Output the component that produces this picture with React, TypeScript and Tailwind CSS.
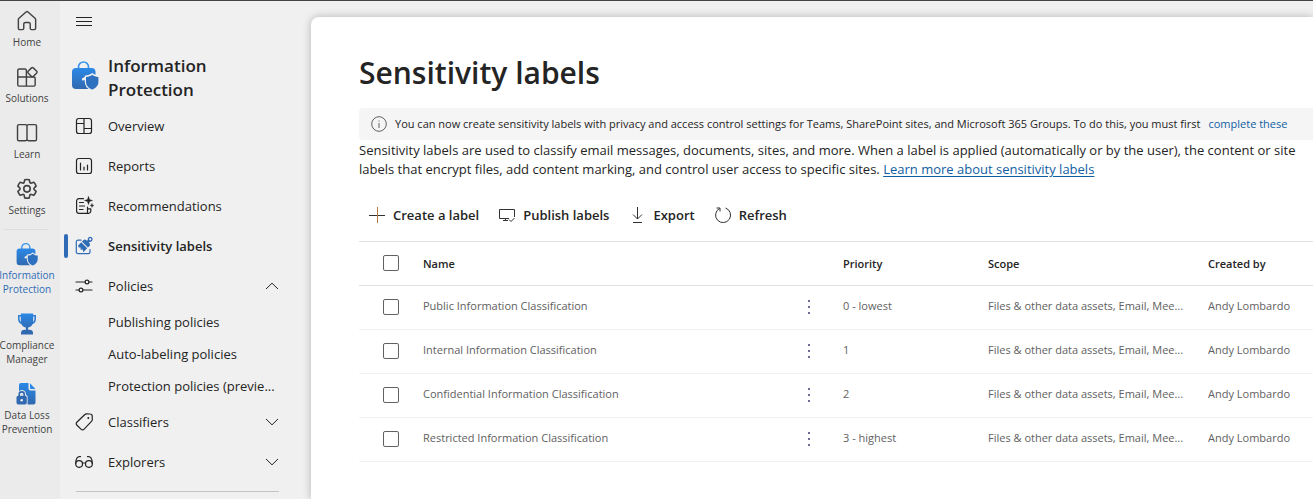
import type { ReactNode } from "react";

type IconProps = { children: ReactNode; className?: string };

function LineIcon({ children, className = "size-5" }: IconProps) {
  return (
    <svg
      viewBox="0 0 20 20"
      className={className}
      fill="none"
      stroke="currentColor"
      strokeWidth="1.2"
      strokeLinecap="round"
      strokeLinejoin="round"
      aria-hidden="true"
    >
      {children}
    </svg>
  );
}

const HomeIcon = () => (
  <LineIcon className="size-6">
    <path d="M9.2 2.5a1.2 1.2 0 0 1 1.6 0l5.900 5.200c.3.3.5.7.5 1.100v7.300c0 .6-.5 1.100-1.100 1.100h-2.300c-.6 0-1.100-.5-1.100-1.100v-3.500c0-.8-.6-1.400-1.400-1.400H8.700c-.8 0-1.400.6-1.400 1.400v3.500c0 .6-.5 1.100-1.100 1.100H3.900c-.6 0-1.100-.5-1.100-1.100V8.800c0-.4.200-.8.500-1.100z" />
  </LineIcon>
);

const SolutionsIcon = () => (
  <LineIcon className="size-6">
    <path d="M9.500 10V4.500c0-.6-.5-1.100-1.100-1.100H3.400c-.6 0-1.100.5-1.100 1.100v12c0 .6.500 1.100 1.100 1.100h12.300c.6 0 1.100-.5 1.100-1.100v-5.400c0-.6-.5-1.100-1.100-1.100zM2.300 10h7.200M9.500 10v7.600" />
    <path d="M13.800 2.400a1 1 0 0 1 1.400 0l2.900 2.900a1 1 0 0 1 0 1.400l-2.900 2.900a1 1 0 0 1-1.400 0l-2.900-2.900a1 1 0 0 1 0-1.400z" />
  </LineIcon>
);

const LearnIcon = () => (
  <LineIcon className="size-6">
    <path d="M10 4.200c0-.7-.6-1.200-1.300-1.200H3.200c-.6 0-1.100.5-1.100 1.100v11.300c0 .6.500 1.100 1.100 1.100h5.500c.7 0 1.300-.5 1.300-1.200zM10 4.200c0-.7.6-1.200 1.300-1.200h5.500c.6 0 1.100.5 1.100 1.100v11.300c0 .6-.5 1.100-1.100 1.100h-5.500c-.7 0-1.300-.5-1.300-1.200z" />
  </LineIcon>
);

const SettingsIcon = () => (
  <LineIcon className="size-6">
    <g transform="translate(10 10) scale(1.120) translate(-10 -9.200)">
      <path d="M8.300 2.300a7.900 7.900 0 0 1 3.400 0l.4 1.900c.1.500.7.800 1.200.6l1.800-.6a7.900 7.900 0 0 1 1.700 2.900l-1.400 1.300a.9.900 0 0 0 0 1.300l1.400 1.200a7.900 7.900 0 0 1-1.700 3l-1.800-.6a.9.900 0 0 0-1.200.6l-.4 1.900a7.900 7.900 0 0 1-3.400 0l-.4-1.900a.9.900 0 0 0-1.200-.6l-1.800.6a7.900 7.900 0 0 1-1.700-3l1.400-1.200a.9.900 0 0 0 0-1.300L3.200 7.100a7.900 7.900 0 0 1 1.700-2.900l1.800.6c.5.200 1.100-.1 1.200-.6z" />
      <circle cx="10" cy="9.100" r="2.400" />
    </g>
  </LineIcon>
);

function ShieldBag({ className, gap }: { className: string; gap: string }) {
  return (
    <svg viewBox="0 0 28 30" className={className} aria-hidden="true">
      <defs>
        <linearGradient id="bagFill" x1="0" y1="0" x2="0" y2="1">
          <stop offset="0" stopColor="#2b88e6" />
          <stop offset="1" stopColor="#3069b0" />
        </linearGradient>
      </defs>
      <path d="M7.500 9.500V7a5 5 0 0 1 10 0v2.500" fill="none" stroke="#3a94ea" strokeWidth="1.700" />
      <rect x="1" y="8" width="23.500" height="21" rx="4" fill="url(#bagFill)" />
      <path
        d="M21.200 14.500c1.700 1.500 3.600 2 6.200 2.200v5c0 3.900-2.500 6.300-6.200 7.800-3.700-1.500-6.200-3.900-6.200-7.800v-5c2.600-.2 4.500-.7 6.200-2.200z"
        fill={gap}
        stroke={gap}
        strokeWidth="2.400"
      />
      <path d="M11 18.500l3.500-2 1 3.500-4.500.5z" fill={gap} />
      <path
        d="M21.200 14.800c1.700 1.500 3.600 2 6.200 2.200v4.700c0 3.900-2.500 6.300-6.200 7.800-3.700-1.500-6.200-3.900-6.200-7.800V17c2.600-.2 4.500-.7 6.200-2.200z"
        fill="#2d70bf"
      />
    </svg>
  );
}

const TrophyIcon = () => (
  <svg viewBox="0 0 24 24" className="size-6" aria-hidden="true">
    <defs>
      <linearGradient id="cupFill" x1="0" y1="0" x2="0" y2="1">
        <stop offset="0" stopColor="#2b88e6" />
        <stop offset="1" stopColor="#3069b0" />
      </linearGradient>
    </defs>
    <path d="M6.500 3.700H3.800v3c0 2.700 1.600 4.500 4.200 4.900M17.500 3.700h2.700v3c0 2.700-1.600 4.500-4.200 4.900" fill="none" stroke="#2f80d4" strokeWidth="1.600" />
    <path d="M5.800 1.500h12.400v7.800c0 3.300-2.100 5.700-5.100 6.200V18h-2.200v-2.500c-3-.5-5.100-2.900-5.100-6.200z" fill="url(#cupFill)" />
    <path d="M9.500 17.800h5c2 0 3.500 1.300 3.500 3v1.700H6v-1.700c0-1.700 1.500-3 3.500-3z" fill="#3069b0" />
  </svg>
);

const DataLossIcon = () => (
  <svg viewBox="0 0 24 24" className="size-6" aria-hidden="true">
    <defs>
      <linearGradient id="fileFill" x1="0" y1="0" x2="0" y2="1">
        <stop offset="0" stopColor="#2b88e6" />
        <stop offset="1" stopColor="#3069b0" />
      </linearGradient>
    </defs>
    <path d="M6 1H13.500v5.500C13.500 7.600 14.400 8.500 15.500 8.500H20.500v12a2 2 0 0 1-2 2H12.600V14.500a1.600 1.600 0 0 0-1.600-1.600V12a4 4 0 0 0-7-2.600V3a2 2 0 0 1 2-2z" fill="url(#fileFill)" />
    <path d="M15 1.300l5.500 5.700h-4.700a.8.800 0 0 1-.8-.8z" fill="#2b88e6" />
    <rect x="1.500" y="13.800" width="10.300" height="8.700" rx="1.800" fill="#3069b0" />
    <path d="M4.200 14v-1.600a2.500 2.500 0 0 1 5 0V14" fill="none" stroke="#3069b0" strokeWidth="1.600" />
    <circle cx="6.700" cy="18.200" r="1.300" fill="#ebebeb" />
  </svg>
);

const OverviewIcon = () => (
  <LineIcon>
    <rect x="2.500" y="2.500" width="15" height="15" rx="2.300" />
    <path d="M10 2.500v15M2.500 7.500H10M10 12.500h7.500" />
  </LineIcon>
);

const ReportsIcon = () => (
  <LineIcon>
    <rect x="2.500" y="2.500" width="15" height="15" rx="2.300" />
    <path d="M6.500 7v7M10 11v3M13.500 9v5" />
  </LineIcon>
);

const RecommendationsIcon = () => (
  <LineIcon>
    <path d="M9.500 2.700H4.800a2.200 2.200 0 0 0-2.200 2.200v10.200c0 1.200 1 2.200 2.200 2.200h9.400M13.500 17.300V11M13.500 17.300h1.100a2.200 2.200 0 0 0 2.200-2.200v-2.300h-3.300M5.500 6.500h4M5.500 10h5M5.500 13.500h3.500" />
    <path d="M14.500.3l1.100 3.100 3.100 1.100-3.100 1.100-1.100 3.100-1.100-3.100-3.100-1.100 3.100-1.100zM18 7.500l.6 1.400 1.400.6-1.400.6-.6 1.400-.6-1.400-1.400-.6 1.400-.6z" fill="currentColor" strokeWidth=".3" />
  </LineIcon>
);

const SensitivityIcon = () => (
  <LineIcon>
    <path d="M7 4.200H4a1.700 1.700 0 0 0-1.700 1.700v10A1.700 1.700 0 0 0 4 17.600h10.300a1.700 1.700 0 0 0 1.700-1.700V13.500" />
    <g transform="translate(11.500 8) rotate(45)" stroke="none" fill="currentColor">
      <path d="M-4.200 1.800h8.400v5.500L2 5.900.6 7.500-1 6-2.300 7.400-4.200 6.200z" />
      <path d="M-4.200.8v-2.300c0-1.100.8-1.800 1.800-1.800h1l.4-2.400h2l.4 2.400h1c1 0 1.800.7 1.800 1.800V.8z" />
      <circle cx="0" cy="-6.600" r="1.800" fill="none" stroke="currentColor" strokeWidth="1.300" />
    </g>
  </LineIcon>
);

const PoliciesIcon = () => (
  <LineIcon>
    <path d="M2 6h9M15 6h3M2 14h3M9 14h9" />
    <circle cx="13" cy="6" r="1.900" />
    <circle cx="7" cy="14" r="1.900" />
  </LineIcon>
);

const TagIcon = () => (
  <LineIcon>
    <path d="M10.900 2.500c.4-.4 1-.6 1.500-.6l3.700.1c1.200 0 2.100 1 2.100 2.100l.1 3.500c0 .6-.2 1.100-.6 1.500l-7.800 8.200a1.900 1.900 0 0 1-2.700 0l-4.400-4.300a1.900 1.900 0 0 1 0-2.700z" />
    <circle cx="14.300" cy="5.900" r="1" fill="currentColor" stroke="none" />
  </LineIcon>
);

const GlassesIcon = () => (
  <LineIcon>
    <rect x="1.700" y="8.700" width="6.800" height="6.600" rx="3.200" />
    <rect x="11.500" y="8.700" width="6.800" height="6.600" rx="3.200" />
    <path d="M8.500 11h3M1.700 11.500c.1-3 .9-5.600 2.300-6.500.7-.4 1.700-.5 2.500-.3M18.300 11.500c-.1-3-.9-5.600-2.300-6.500-.7-.4-1.700-.5-2.500-.3" />
  </LineIcon>
);

function Chevron({ up = false }: { up?: boolean }) {
  return (
    <svg viewBox="0 0 14 8" className="h-2 w-3.5" fill="none" stroke="#242424" strokeWidth="1" aria-hidden="true">
      <path d={up ? "M1 7l6-5.800L13 7" : "M1 1l6 5.800L13 1"} />
    </svg>
  );
}

function RailLink({ icon, label, active = false }: { icon: ReactNode; label: string; active?: boolean }) {
  return (
    <a
      href="#"
      className={`flex w-[54px] flex-col items-center gap-0.5 py-2 text-center text-[10px] leading-[14px] ${
        active ? "text-[#2f6cb5]" : "text-[#424242]"
      }`}
    >
      {icon}
      <span>{label}</span>
    </a>
  );
}

function NavLink({
  icon,
  label,
  active = false,
  chevron,
}: {
  icon: ReactNode;
  label: string;
  active?: boolean;
  chevron?: "up" | "down";
}) {
  return (
    <a href="#" className="flex h-10 items-center pl-1 text-[13px] leading-5 text-[#242424]">
      <span className={`h-6 w-1 rounded-sm ${active ? "bg-[#2f6cb5]" : ""}`} />
      <span className={`ml-1.5 ${active ? "text-[#2f6cb5]" : ""}`}>{icon}</span>
      <span className={`ml-3.5 grow whitespace-nowrap ${active ? "font-semibold" : ""}`}>{label}</span>
      {chevron && <Chevron up={chevron === "up"} />}
    </a>
  );
}

function SubLink({ label }: { label: string }) {
  return (
    <a href="#" className="flex h-8 items-center pl-12 text-[13px] leading-5 whitespace-nowrap text-[#242424]">
      {label}
    </a>
  );
}

function ToolButton({ icon, label }: { icon: ReactNode; label: string }) {
  return (
    <button type="button" className="flex items-center gap-2 text-[13px] leading-5 font-semibold text-[#242424]">
      {icon}
      {label}
    </button>
  );
}

function ToolIcon({ children }: { children: ReactNode }) {
  return (
    <svg viewBox="0 0 16 16" className="size-4" fill="none" stroke="#323130" strokeWidth="1" aria-hidden="true">
      {children}
    </svg>
  );
}

function Check({ label }: { label: string }) {
  return (
    <input
      type="checkbox"
      aria-label={label}
      className="block size-4 appearance-none rounded-[2px] border border-[#616161] bg-white checked:bg-[#2f6cb5]"
    />
  );
}

const labels = [
  { name: "Public Information Classification", priority: "0 - lowest" },
  { name: "Internal Information Classification", priority: "1" },
  { name: "Confidential Information Classification", priority: "2" },
  { name: "Restricted Information Classification", priority: "3 - highest" },
];

export default function App() {
  return (
    <div className="flex min-h-screen overflow-hidden border-t border-[#444444] bg-[#f0f0f0] font-['Open_Sans','Noto_Sans',sans-serif]">
      <nav aria-label="Portal" className="w-[60px] shrink-0 bg-[#ebebeb]">
        <RailLink icon={<HomeIcon />} label="Home" />
        <RailLink icon={<SolutionsIcon />} label="Solutions" />
        <RailLink icon={<LearnIcon />} label="Learn" />
        <RailLink icon={<SettingsIcon />} label="Settings" />
        <div className="my-1 mr-3 ml-1 h-px bg-[#dcdcdc]" />
        <RailLink icon={<ShieldBag className="size-6" gap="#ebebeb" />} label="Information Protection" active />
        <RailLink icon={<TrophyIcon />} label="Compliance Manager" />
        <RailLink icon={<DataLossIcon />} label="Data Loss Prevention" />
      </nav>

      <aside className="w-[251px] shrink-0 pt-px pr-8">
        <button type="button" aria-label="Toggle navigation" className="flex h-10 items-center pl-4">
          <svg viewBox="0 0 16 10" className="h-2.5 w-4" stroke="#242424" strokeWidth="1" aria-hidden="true">
            <path d="M0 .5h16M0 4.500h16M0 8.500h16" />
          </svg>
        </button>
        <div className="mt-3 mb-1 flex items-start gap-[9px] pl-[11px]">
          <ShieldBag className="mt-1.5 h-[30px] w-7 shrink-0" gap="#f0f0f0" />
          <h2 className="text-[17px] leading-6 font-semibold text-[#242424]">
            Information
            <br />
            Protection
          </h2>
        </div>
        <NavLink icon={<OverviewIcon />} label="Overview" />
        <NavLink icon={<ReportsIcon />} label="Reports" />
        <NavLink icon={<RecommendationsIcon />} label="Recommendations" />
        <NavLink icon={<SensitivityIcon />} label="Sensitivity labels" active />
        <NavLink icon={<PoliciesIcon />} label="Policies" chevron="up" />
        <SubLink label="Publishing policies" />
        <SubLink label="Auto-labeling policies" />
        <SubLink label="Protection policies (previe..." />
        <NavLink icon={<TagIcon />} label="Classifiers" chevron="down" />
        <NavLink icon={<GlassesIcon />} label="Explorers" chevron="down" />
        <div className="mt-[9px] ml-4 h-px bg-[#c4c4c4]" />
      </aside>

      <main className="mt-4 min-w-0 grow overflow-hidden rounded-tl-lg bg-white pt-8 pl-12 text-[#242424] shadow-[0_0_8px_rgba(0,0,0,0.25)]">
        <h1 className="text-[30px] leading-[48px] font-semibold">Sensitivity labels</h1>
        <div className="mt-[11px] flex h-8 items-center rounded-l bg-[#f5f5f5] pl-3 text-[11px] leading-4 whitespace-nowrap">
          <svg viewBox="0 0 16 16" className="size-4 shrink-0" fill="none" stroke="#616161" strokeWidth="1" aria-hidden="true">
            <circle cx="8" cy="8" r="7.300" />
            <path d="M8 7v5M8 4.500v1" />
          </svg>
          <p className="ml-2">
            You can now create sensitivity labels with privacy and access control settings for Teams, SharePoint sites,
            and Microsoft 365 Groups. To do this, you must first
            <a href="#" className="ml-2 text-[#115ea3]">
              complete these
            </a>
          </p>
        </div>
        <p className="mt-px text-[13px] leading-[19px] whitespace-nowrap">
          Sensitivity labels are used to classify email messages, documents, sites, and more. When a label is applied
          (automatically or by the user), the content or site
          <br />
          labels that encrypt files, add content marking, and control user access to specific sites.{" "}
          <a href="#" className="text-[#115ea3] underline underline-offset-2">
            Learn more about sensitivity labels
          </a>
        </p>

        <div className="mt-[26px] flex h-5 items-center gap-5 pl-2.5">
          <ToolButton
            label="Create a label"
            icon={
              <ToolIcon>
                <path d="M0 8.500h16" />
                <path d="M8.500 0v16" stroke="#b07a3a" />
              </ToolIcon>
            }
          />
          <ToolButton
            label="Publish labels"
            icon={
              <ToolIcon>
                <path d="M10 11.500H.5v-9h15v7.500M6.500 11.500v2M4 13.500h5M10 12.500l2 2L15.500 11" />
              </ToolIcon>
            }
          />
          <ToolButton
            label="Export"
            icon={
              <ToolIcon>
                <path d="M8.500 0v12M4 7.500l4.500 4.500L13 7.500M4 15.500h9" />
              </ToolIcon>
            }
          />
          <ToolButton
            label="Refresh"
            icon={
              <ToolIcon>
                <path d="M4.500 1.500A7.500 7.500 0 1 0 10.500 1M1.500 1h3.500v3.500" />
              </ToolIcon>
            }
          />
        </div>

        <table className="mt-4 w-full min-w-[954px] table-fixed border-t border-[#e0e0e0] text-left text-[11px] leading-4">
          <colgroup>
            <col className="w-16" />
            <col className="w-[370px]" />
            <col className="w-[50px]" />
            <col className="w-[145px]" />
            <col className="w-[220px]" />
            <col />
          </colgroup>
          <thead>
            <tr className="h-11 border-b border-[#e0e0e0]">
              <th className="pb-0.5 pl-6">
                <Check label="Select all labels" />
              </th>
              <th className="font-semibold">Name</th>
              <th />
              <th className="font-semibold">Priority</th>
              <th className="font-semibold">Scope</th>
              <th className="font-semibold">Created by</th>
            </tr>
          </thead>
          <tbody className="text-[#616161]">
            {labels.map((row) => (
              <tr key={row.name} className="h-11 border-b border-[#f3f2f1]">
                <td className="pb-0.5 pl-6">
                  <Check label={row.name} />
                </td>
                <td className="pb-1">{row.name}</td>
                <td className="pb-0.5">
                  <button type="button" aria-label="More actions" className="flex w-8 justify-center">
                    <svg viewBox="0 0 4 14" className="h-3.5 w-1" fill="#6c6c94" aria-hidden="true">
                      <path d="M1 0h2v2H1zM1 6h2v2H1zM1 12h2v2H1z" />
                    </svg>
                  </button>
                </td>
                <td className="pb-1">{row.priority}</td>
                <td className="pb-1">Files &amp; other data assets, Email, Mee...</td>
                <td className="pb-1">Andy Lombardo</td>
              </tr>
            ))}
          </tbody>
        </table>
      </main>
    </div>
  );
}
